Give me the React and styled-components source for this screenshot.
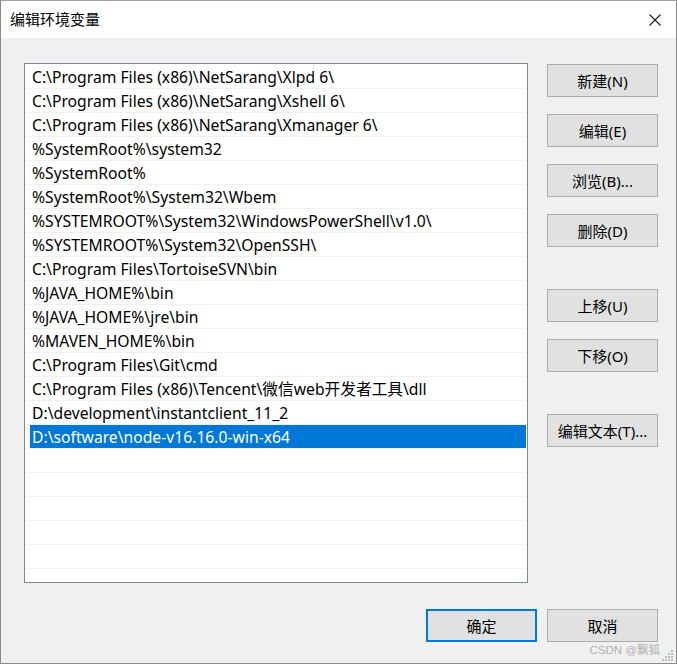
import styled, { createGlobalStyle } from 'styled-components';

const GlobalStyle = createGlobalStyle`
  html, body {
    margin: 0;
    padding: 0;
    background: #ffffff;
  }
  * {
    box-sizing: border-box;
  }
`;

const paths = [
    'C:\\Program Files (x86)\\NetSarang\\Xlpd 6\\',
    'C:\\Program Files (x86)\\NetSarang\\Xshell 6\\',
    'C:\\Program Files (x86)\\NetSarang\\Xmanager 6\\',
    '%SystemRoot%\\system32',
    '%SystemRoot%',
    '%SystemRoot%\\System32\\Wbem',
    '%SYSTEMROOT%\\System32\\WindowsPowerShell\\v1.0\\',
    '%SYSTEMROOT%\\System32\\OpenSSH\\',
    'C:\\Program Files\\TortoiseSVN\\bin',
    '%JAVA_HOME%\\bin',
    '%JAVA_HOME%\\jre\\bin',
    '%MAVEN_HOME%\\bin',
    'C:\\Program Files\\Git\\cmd',
    'C:\\Program Files (x86)\\Tencent\\微信web开发者工具\\dll',
    'D:\\development\\instantclient_11_2',
    'D:\\software\\node-v16.16.0-win-x64',
];

const sideGroups = [
    ['新建(N)', '编辑(E)', '浏览(B)...', '删除(D)'],
    ['上移(U)', '下移(O)'],
    ['编辑文本(T)...'],
];

const App = () => {
    const selected = paths.length - 1;
    const blanks = Array.from({ length: 5 });

    return (
        <>
            <GlobalStyle />
            <Window>
                <TitleBar>
                    <Title>编辑环境变量</Title>
                    <CloseButton>
                        <svg width="12" height="12" viewBox="0 0 12 12">
                            <path d="M0.5 0.5 L11.5 11.5 M11.5 0.5 L0.5 11.5" stroke="#1a1a1a" strokeWidth="1.1" fill="none" />
                        </svg>
                    </CloseButton>
                </TitleBar>
                <Body>
                    <Main>
                        <PathList>
                            {paths.map((p, i) => (
                                <Row key={p}>
                                    <Cell $selected={i === selected}>{p}</Cell>
                                </Row>
                            ))}
                            {blanks.map((_, i) => (
                                <Row key={'blank' + i}>
                                    <Cell />
                                </Row>
                            ))}
                        </PathList>
                        <SideColumn>
                            {sideGroups.map((group, gi) => (
                                <ButtonGroup key={gi}>
                                    {group.map(label => (
                                        <Button key={label}>{label}</Button>
                                    ))}
                                </ButtonGroup>
                            ))}
                        </SideColumn>
                    </Main>
                    <Footer>
                        <Button $primary>确定</Button>
                        <Button>取消</Button>
                    </Footer>
                </Body>
                <Watermark>CSDN @飘狐</Watermark>
                <Grip>
                    <svg width="12" height="12" viewBox="0 0 12 12">
                        {[[9, 1], [6, 4], [9, 4], [3, 7], [6, 7], [9, 7], [0, 10], [3, 10], [6, 10], [9, 10]].map(([x, y]) => (
                            <rect key={x + '-' + y} x={x} y={y} width="2" height="2" fill="#bcbcbc" />
                        ))}
                    </svg>
                </Grip>
            </Window>
        </>
    );
}

export default App;

const Window = styled.div`
  position: relative;
  width: 677px;
  height: 664px;
  display: flex;
  flex-direction: column;
  background: #f0f0f0;
  border: 1px solid #8a8a8a;
  border-top-color: #a0a0a0;
  font-family: "Noto Sans", "Noto Sans CJK SC", sans-serif;
  color: #000;
`

const TitleBar = styled.div`
  height: 37px;
  flex-shrink: 0;
  display: flex;
  align-items: center;
  justify-content: space-between;
  background: #ffffff;
  padding: 0 15px 0 9px;
`

const Title = styled.div`
  font-size: 15px;
  line-height: 1;
  padding-bottom: 1px;
`

const CloseButton = styled.div`
  width: 12px;
  height: 12px;
  display: flex;
`

const Body = styled.div`
  flex: 1;
  display: flex;
  flex-direction: column;
  padding: 25px 18px 0 23px;
`

const Main = styled.div`
  display: flex;
  gap: 19px;
`

const PathList = styled.div`
  width: 504px;
  height: 520px;
  background: #ffffff;
  border: 1px solid #828790;
  padding: 1px;
  overflow: hidden;
`

const Row = styled.div`
  height: 24px;
  padding-left: 4px;
  border-bottom: 1px solid #f0f0f0;
`

const Cell = styled.div`
  height: 23px;
  padding-left: 2px;
  font-size: 15.7px;
  line-height: 24px;
  white-space: nowrap;
  background: ${p => p.$selected ? '#0078d7' : 'transparent'};
  color: ${p => p.$selected ? '#ffffff' : '#000000'};
`

const SideColumn = styled.div`
  display: flex;
  flex-direction: column;
  gap: 42px;
  padding-top: 1px;
`

const ButtonGroup = styled.div`
  display: flex;
  flex-direction: column;
  gap: 17px;
`

const Button = styled.div`
  width: 111px;
  height: 33px;
  display: flex;
  align-items: center;
  justify-content: center;
  padding-bottom: 1px;
  background: #e1e1e1;
  border: ${p => p.$primary ? '2px solid #0078d7' : '1px solid #adadad'};
  font-size: 15px;
  white-space: nowrap;
`

const Footer = styled.div`
  display: flex;
  justify-content: flex-end;
  gap: 10px;
  margin-top: 26px;
`

const Watermark = styled.div`
  position: absolute;
  right: 16px;
  bottom: 6px;
  font-size: 11.5px;
  color: #b0b0b0;
  font-family: "Liberation Sans", "Noto Sans CJK SC", sans-serif;
`

const Grip = styled.div`
  position: absolute;
  right: 2px;
  bottom: 2px;
  width: 12px;
  height: 12px;
  display: flex;
`
